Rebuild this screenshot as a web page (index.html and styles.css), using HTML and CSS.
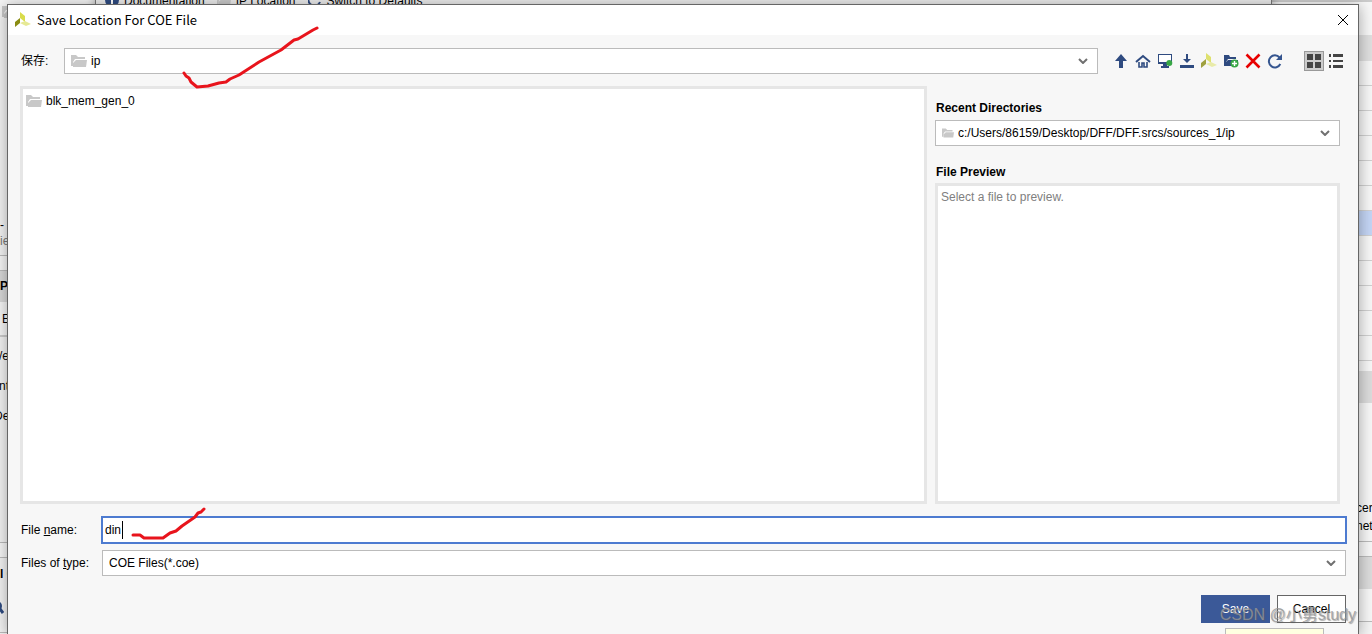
FILE: index.html
```html
<!DOCTYPE html>
<html lang="en">
<head>
  <meta charset="UTF-8">
  <title>Save Location For COE File</title>
  <meta name="viewport" content="width=device-width, initial-scale=1">
  <link rel="stylesheet" href="styles.css">
</head>
<body>
  <svg class="defs" aria-hidden="true">
    <symbol id="folder" viewBox="0 0 16 14">
      <path d="M0 1h5l2 2h7v2H4L2 8v4H0z" fill="#c8c8c8"/>
      <path d="M5 6h11l-1 7H2V9z" fill="#c8c8c8"/>
    </symbol>
    <symbol id="logo" viewBox="0 0 16 16">
      <path class="leaf-top" d="M5 0l5 4v6L5 6z"/>
      <path class="leaf-left" d="M0 10l5-4v5l-5 4z"/>
      <path class="leaf-right" d="M5 11l5-2 6 3-5 2z"/>
    </symbol>
    <symbol id="chevron" viewBox="0 0 10 6">
      <path d="M1 1l4 4 4-4" fill="none" stroke="#707070" stroke-width="2"/>
    </symbol>
  </svg>

  <!-- windows behind the dialog -->
  <div class="back" aria-hidden="true">
    <div class="back-left">
      <svg class="back-folder"><use href="#folder"/></svg>
      <div class="back-tree"><span>-</span><span class="dim">ie</span></div>
      <div class="back-gap"></div>
      <div class="back-head">P</div>
      <div class="back-tab">E</div>
      <div class="back-props"><span>/e</span><span>nt</span><span class="cut">De</span></div>
      <div class="back-gap"></div>
      <div class="back-tcl">l <i>C</i></div>
      <div class="back-search">
        <svg viewBox="0 0 12 14"><circle cx="5" cy="6" r="4" fill="none" stroke="#2f4b80" stroke-width="2"/><path d="M8 9l3 4" stroke="#2f4b80" stroke-width="3"/></svg>
      </div>
    </div>
    <div class="back-toolbar">
      <span class="back-item"><svg viewBox="0 0 14 14"><circle cx="7" cy="7" r="7" fill="#2f4b80"/><path d="M7 6v5M7 3v2" stroke="#fff" stroke-width="2"/></svg>Documentation</span>
      <span class="back-item"><svg viewBox="0 0 16 14"><use href="#folder"/></svg>IP Location</span>
      <span class="back-item"><svg viewBox="0 0 14 14"><path d="M10 2a6 6 0 1 0 2 7" fill="none" stroke="#2f4b80" stroke-width="2"/></svg>Switch to Defaults</span>
    </div>
    <div class="back-right">
      <div class="row-top"></div>
      <div class="row-head"></div>
      <div class="row"></div><div class="row"></div><div class="row"></div>
      <div class="row"></div><div class="row"></div><div class="row"></div>
      <div class="row selected"></div>
      <div class="row"></div><div class="row"></div><div class="row"></div>
      <div class="row"></div><div class="row"></div>
      <div class="row-space"></div>
      <div class="row-bar"></div>
      <div class="row-text"><span>cer</span><span>net</span></div>
      <div class="back-gap"></div>
      <div class="row-bar"></div>
      <div class="row-last"></div>
    </div>
  </div>

  <form class="dialog" onsubmit="return false">
    <header class="titlebar">
      <svg class="logo"><use href="#logo"/></svg>
      <h1>Save Location For COE File</h1>
      <button type="button" class="close" aria-label="Close">
        <svg viewBox="0 0 12 12"><path d="M1 1l10 10M11 1L1 11" stroke="#000" fill="none"/></svg>
      </button>
    </header>

    <div class="content">
      <div class="location">
        <label for="saveIn" lang="zh">保存:</label>
        <div class="combo">
          <svg class="combo-icon"><use href="#folder"/></svg>
          <select id="saveIn"><option>ip</option></select>
          <svg class="arrow"><use href="#chevron"/></svg>
        </div>
        <div class="tools">
          <button type="button" aria-label="Up"><svg viewBox="0 0 16 16"><path d="M8 1l6 7h-4v7H6V8H2z" fill="#2f4b80"/></svg></button>
          <button type="button" aria-label="Home"><svg viewBox="0 0 16 16"><path d="M1 9l7-6 7 6" fill="none" stroke="#2f4b80" stroke-width="2"/><path d="M4 9v5h3v-4h2v4h3V9" fill="none" stroke="#2f4b80" stroke-width="1.6"/></svg></button>
          <button type="button" aria-label="Desktop"><svg viewBox="0 0 16 16"><path d="M1.500 1.500h13v9h-13z" fill="#fff" stroke="#2f4b80"/><path d="M1 9h14v2H1zM6 11h4v2h2v2H4v-2h2zM1 1h14v1H1z" fill="#2f4b80"/><circle cx="12.300" cy="10" r="3" fill="#37a745"/></svg></button>
          <button type="button" aria-label="Downloads"><svg viewBox="0 0 16 16"><path d="M7 1h2v5h3l-4 4-4-4h3zM1 12h14v3H1z" fill="#2f4b80"/></svg></button>
          <button type="button" aria-label="Install directory"><svg class="faded" viewBox="0 0 16 16"><use href="#logo"/></svg></button>
          <button type="button" aria-label="New folder"><svg viewBox="0 0 16 16"><path d="M1 2h5l1 2h6v2H5L3 9v4H1z" fill="#2f4b80"/><path d="M5 7h10v6H3V9z" fill="#2f4b80"/><circle cx="11.500" cy="10.500" r="4" fill="#37a745"/><path d="M11.500 8v5M9 10.500h5" stroke="#fff" stroke-width="1.400"/></svg></button>
          <button type="button" aria-label="Delete"><svg viewBox="0 0 16 16"><path d="M1.500 1.500l13 13M14.500 1.500l-13 13" stroke="#e80000" stroke-width="2.600"/></svg></button>
          <button type="button" aria-label="Refresh"><svg viewBox="0 0 16 16"><path d="M12.500 4.500a6 6 0 1 0 .8 6.500" fill="none" stroke="#35558f" stroke-width="2"/><path d="M15 1v6H9z" fill="#35558f"/></svg></button>
        </div>
        <div class="views">
          <button type="button" class="active" aria-label="Grid view"><svg viewBox="0 0 16 16"><path d="M1 1h6v6H1zM9 1h6v6H9zM1 9h6v6H1zM9 9h6v6H9z" fill="#444"/></svg></button>
          <button type="button" aria-label="List view"><svg viewBox="0 0 16 16"><path d="M1 1h2v3H1zM5 1h10v3H5zM1 7h2v2H1zM5 7h10v2H5zM1 12h2v3H1zM5 12h10v3H5z" fill="#444"/></svg></button>
        </div>
      </div>

      <div class="browser">
        <ul class="files">
          <li><button type="button"><svg><use href="#folder"/></svg>blk_mem_gen_0</button></li>
        </ul>
        <div class="side">
          <label for="recent">Recent Directories</label>
          <div class="combo small">
            <svg class="combo-icon"><use href="#folder"/></svg>
            <select id="recent"><option>c:/Users/86159/Desktop/DFF/DFF.srcs/sources_1/ip</option></select>
            <svg class="arrow"><use href="#chevron"/></svg>
          </div>
          <h2>File Preview</h2>
          <div class="preview">Select a file to preview.</div>
        </div>
      </div>

      <div class="field name">
        <label for="fileName">File <u>n</u>ame:</label>
        <div class="name-box">
          <input type="text" id="fileName" value="din">
          <span class="caret"></span>
        </div>
      </div>
      <div class="field">
        <label for="fileType">Files of <u>t</u>ype:</label>
        <div class="combo plain">
          <select id="fileType"><option>COE Files(*.coe)</option></select>
          <svg class="arrow"><use href="#chevron"/></svg>
        </div>
      </div>

      <div class="actions">
        <button type="submit" class="save">Save</button>
        <button type="button" class="cancel">Cancel</button>
        <div class="tooltip"></div>
        <span class="watermark">CSDN @小勇study</span>
      </div>
    </div>

    <!-- hand-drawn marks -->
    <svg class="mark mark-top" viewBox="0 0 140 66"><path d="M2 50l2 3 3 2 2 4 6 5 11-1 11-3 7-1 4-3 9-4 20-13 22-12 13-10 4-1 15-9 4-2"/></svg>
    <svg class="mark mark-name" viewBox="0 0 80 34"><path d="M4 28h7l4 3h19l7-5 6-2 6-5 13-9 3-4 3-1 3-3"/></svg>
  </form>
</body>
</html>
```

FILE: styles.css
```css
* {
  box-sizing: border-box;
}

body {
  margin: 0;
  min-height: 100vh;
  overflow: hidden;
  background: #f4f4f4;
  color: #000;
  font-family: "Liberation Sans", "Noto Sans CJK SC", sans-serif;
  font-size: 12px;
  line-height: 16px;
}

button, input, select {
  margin: 0;
  font: inherit;
  color: inherit;
}

svg {
  display: block;
}

.defs {
  position: absolute;
  width: 0;
  height: 0;
}

.leaf-top { fill: #d9dc4c; }
.leaf-left { fill: #8a8c12; }
.leaf-right { fill: #e6e996; }

/* windows behind */
.back {
  position: absolute;
  inset: 0;
  overflow: hidden;
}

.back-left {
  position: absolute;
  left: 0;
  top: 0;
  width: 8px;
  overflow: hidden;
  white-space: nowrap;
}

.back-folder {
  width: 16px;
  height: 14px;
  margin: 5px 0 0 2px;
}

.back-left span {
  display: block;
}

.back-tree {
  height: 237px;
  padding-top: 198px;
  border-bottom: 1px solid #bbb;
}

.back-tree .dim {
  color: #777;
}

.back-gap {
  height: 15px;
  background: #f7f7f7;
  border-bottom: 1px solid #bbb;
}

.back-head {
  height: 31px;
  line-height: 31px;
  background: #d9d9d9;
  font-weight: bold;
}

.back-tab {
  height: 35px;
  padding-left: 2px;
  line-height: 34px;
  background: #f7f7f7;
  border-bottom: 2px solid #ccc;
}

.back-props {
  height: 206px;
  padding-top: 4px;
  border-bottom: 1px solid #bbb;
  line-height: 30px;
}

.back-props span {
  margin-left: -1px;
}

.back-props .cut {
  margin-left: -6px;
}

.back-tcl {
  height: 34px;
  line-height: 32px;
  font-weight: bold;
}

.back-tcl i {
  color: #c60;
  font-style: normal;
}

.back-search {
  height: 41px;
  padding-top: 8px;
  border-bottom: 1px solid #bbb;
}

.back-search svg {
  width: 12px;
  height: 14px;
  margin-left: -8px;
}

.back-toolbar {
  position: absolute;
  left: 95px;
  right: 100px;
  top: -8px;
  height: 24px;
  padding-left: 9px;
  display: flex;
  gap: 12px;
  background: #ebebeb;
  border: 1px solid #777;
  box-shadow: 0 0 10px rgba(0, 0, 0, 0.3);
}

.back-item {
  display: flex;
  gap: 5px;
  font-size: 12px;
}

.back-item svg {
  width: 14px;
  height: 14px;
}

.back-right {
  position: absolute;
  top: 0;
  right: 0;
  width: 100px;
  z-index: -1;
  background: #f7f7f7;
}

.row-top {
  height: 35px;
  border-top: 2px solid #ccc;
}

.row-head {
  height: 26px;
  background: #dfdfdf;
}

.row {
  height: 25px;
  border-bottom: 1px solid #d0d0d0;
}

.row.selected {
  background: #c4d5f5;
}

.row-space {
  height: 10px;
}

.row-bar {
  height: 32px;
  background: #dcdcdc;
}

.row-text {
  height: 139px;
  padding: 96px 0 0 84px;
  border-bottom: 1px solid #bbb;
  line-height: 18px;
}

.row-text span {
  display: block;
}

.row-last {
  height: 33px;
  border-bottom: 1px solid #bbb;
}

/* dialog */
.dialog {
  position: relative;
  display: flex;
  flex-direction: column;
  min-height: calc(100vh - 4px);
  margin: 4px 13px 0 7px;
  background: #f7f7f7;
  border: 1px solid #666;
  border-bottom: 0;
  box-shadow: 0 2px 14px rgba(0, 0, 0, 0.35);
}

.titlebar {
  display: flex;
  align-items: center;
  height: 30px;
  padding: 0 9px 0 7px;
  background: #fff;
}

.logo {
  width: 16px;
  height: 16px;
}

.titlebar h1 {
  flex: 1;
  margin: 0 0 0 6px;
  font-family: "Noto Sans CJK SC", "Noto Sans", sans-serif;
  font-size: 13px;
  font-weight: normal;
}

.close {
  padding: 0;
  border: 0;
  background: none;
}

.close svg {
  width: 12px;
  height: 12px;
}

.content {
  flex: 1;
  display: flex;
  flex-direction: column;
  padding: 13px 11px 11px 12px;
}

.location {
  display: flex;
  align-items: center;
  padding-right: 1px;
}

.location label {
  width: 44px;
  padding-left: 1px;
}

.combo {
  position: relative;
  flex: 1;
}

.combo select {
  display: block;
  width: 100%;
  height: 26px;
  padding: 0 26px;
  appearance: none;
  background: #fff;
  border: 1px solid #bbb;
  border-radius: 0;
}

.combo-icon {
  position: absolute;
  left: 7px;
  top: 6px;
  width: 16px;
  height: 14px;
}

.arrow {
  position: absolute;
  right: 10px;
  top: 10px;
  width: 10px;
  height: 6px;
}

.tools {
  display: flex;
  margin: 0 18px 0 12px;
}

.tools button, .views button {
  display: grid;
  place-items: center;
  width: 22px;
  height: 20px;
  padding: 0;
  border: 0;
  background: none;
}

.tools svg, .views svg {
  width: 16px;
  height: 16px;
}

.tools .faded {
  opacity: 0.8;
}

.views {
  display: flex;
  gap: 2px;
}

.views button {
  width: 20px;
}

.views .active {
  background: #ccc;
  border: 1px solid #999;
}

.browser {
  flex: 1;
  display: flex;
  gap: 8px;
  margin: 12px 7px 12px 0;
}

.files {
  flex: 1;
  margin: 0;
  padding: 4px 3px;
  list-style: none;
  background: #fff;
  border: 3px solid #e6e6e6;
}

.files button {
  display: flex;
  align-items: center;
  gap: 4px;
  padding: 0;
  border: 0;
  background: none;
}

.files svg {
  width: 16px;
  height: 14px;
}

.side {
  display: flex;
  flex-direction: column;
  width: 32%;
  max-width: 405px;
  padding-top: 14px;
}

.side label, .side h2 {
  margin: 0 0 4px 1px;
  font-size: 12px;
  font-weight: bold;
}

.side h2 {
  margin: 18px 0 3px 1px;
}

.side .combo {
  flex: none;
}

.small select {
  padding-left: 22px;
}

.small .combo-icon {
  width: 12px;
}

.preview {
  flex: 1;
  padding: 3px;
  background: #fff;
  border: 3px solid #e6e6e6;
  color: #808080;
}

.field {
  display: flex;
  align-items: center;
  padding-right: 1px;
}

.field label {
  width: 82px;
  padding-left: 1px;
}

.field.name {
  margin-bottom: 6px;
  padding-right: 0;
}

.name label {
  width: 81px;
}

.name-box {
  position: relative;
  flex: 1;
}

.name-box input {
  display: block;
  width: 100%;
  height: 28px;
  padding: 0 2px;
  background: #fff;
  border: 2px solid #4d7bd0;
  outline: 0;
}

.caret {
  position: absolute;
  left: 21px;
  top: 5px;
  width: 1px;
  height: 18px;
  background: #000;
}

.plain select {
  padding-left: 6px;
}

.actions {
  position: relative;
  display: flex;
  justify-content: flex-end;
  gap: 7px;
  margin: 19px 1px 0 0;
}

.actions button {
  width: 69px;
  height: 28px;
  padding: 0;
  border: 1px solid #3b5998;
}

.actions .save {
  background: #3b5998;
  color: #fff;
}

.actions .cancel {
  background: #fff;
  border-color: #666;
}

.tooltip {
  position: absolute;
  right: 22px;
  top: 33px;
  width: 99px;
  height: 20px;
  background: #ffffe1;
  border: 1px solid #bbb;
}

.watermark {
  position: absolute;
  right: -10px;
  top: 9px;
  color: rgba(150, 150, 150, 0.8);
  font-size: 16px;
  line-height: 22px;
  white-space: nowrap;
  text-shadow: 1px 1px 1px rgba(90, 90, 90, 0.5);
}

.mark {
  position: absolute;
  overflow: visible;
  fill: none;
  stroke: #e8141c;
  stroke-width: 3;
  stroke-linecap: round;
  stroke-linejoin: round;
  pointer-events: none;
}

.mark-top {
  left: 174px;
  top: 18px;
  width: 140px;
  height: 66px;
}

.mark-name {
  left: 121px;
  bottom: 93px;
  width: 80px;
  height: 34px;
}
```
